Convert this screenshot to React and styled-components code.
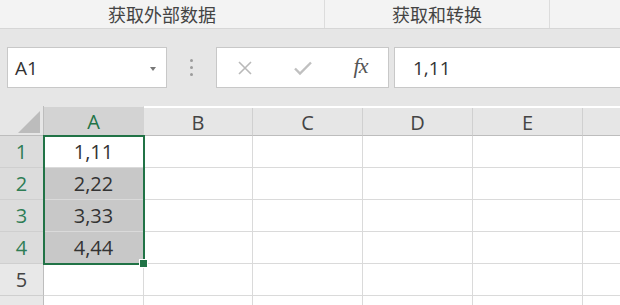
import React from 'react'
import styled, { createGlobalStyle } from 'styled-components'

const GlobalStyle = createGlobalStyle`
  html, body {
    margin: 0;
    padding: 0;
    background: #e6e6e6;
    overflow: hidden;
  }
  body {
    font-family: "Open Sans", "Noto Sans", "Noto Sans CJK SC", sans-serif;
    color: #333;
  }
`

const Page = styled.div`
  width: 620px;
  height: 305px;
  display: flex;
  flex-direction: column;
  overflow: hidden;
`

const Ribbon = styled.div`
  height: 28px;
  flex: none;
  display: flex;
  background: #f3f3f3;
  border-bottom: 1px solid #d6d6d6;
`

const RibbonGroup = styled.div`
  width: ${(p) => p.width}px;
  flex: none;
  height: 28px;
  display: flex;
  align-items: center;
  justify-content: center;
  font-family: "Noto Sans CJK SC", sans-serif;
  font-size: 18px;
  line-height: 24px;
  color: #444;
  box-sizing: border-box;
  border-right: ${(p) => (p.last ? 'none' : '1px solid #dcdcdc')};
  padding-bottom: 1px;
`

const FormulaBar = styled.div`
  height: 77px;
  flex: none;
  display: flex;
  align-items: center;
  padding-left: 7px;
  box-sizing: border-box;
`

const NameBox = styled.div`
  width: 160px;
  height: 41px;
  flex: none;
  box-sizing: border-box;
  background: #fff;
  border: 1px solid #c8c8c8;
  display: flex;
  align-items: center;
  justify-content: space-between;
  padding: 0 10px 0 7px;
  font-size: 19px;
  color: #333;
`

const DropArrow = styled.span`
  width: 0;
  height: 0;
  border-left: 3.5px solid transparent;
  border-right: 3.5px solid transparent;
  border-top: 4px solid #777;
  margin-top: 2px;
`

const Grip = styled.div`
  width: 49px;
  flex: none;
  display: flex;
  flex-direction: column;
  align-items: center;
  gap: 4px;
`

const GripDot = styled.span`
  width: 3px;
  height: 3px;
  border-radius: 50%;
  background: #9c9c9c;
`

const ButtonBox = styled.div`
  width: 173px;
  height: 41px;
  flex: none;
  box-sizing: border-box;
  background: #fff;
  border: 1px solid #c8c8c8;
  display: flex;
  align-items: center;
  padding-left: 13px;
  gap: 29px;
`

const IconButton = styled.div`
  width: 29px;
  height: 29px;
  display: flex;
  align-items: center;
  justify-content: center;
`

const Fx = styled.span`
  font-family: "Liberation Serif", "DejaVu Serif", serif;
  font-style: italic;
  font-size: 22px;
  color: #555;
  letter-spacing: -1px;
  margin-top: -3px;
`

const FormulaInput = styled.div`
  flex: 1;
  min-width: 0;
  margin-left: 5px;
  height: 41px;
  box-sizing: border-box;
  background: #fff;
  border: 1px solid #c8c8c8;
  border-right: none;
  display: flex;
  align-items: center;
  padding-left: 18px;
  font-size: 19px;
  color: #333;
`

const Sheet = styled.div`
  position: relative;
  display: grid;
  grid-template-columns: 44px 100px 109px 110px 110px 110px 60px;
  grid-template-rows: 30px repeat(6, 32px);
  background: #fff;
`

const Corner = styled.div`
  background: #e6e6e6;
  border-bottom: 1px solid #bdbdbd;
  border-right: 1px solid #bdbdbd;
  display: flex;
  align-items: flex-end;
  justify-content: flex-end;
  padding: 0 3px 2px 0;
`

const ColHead = styled.div`
  background: ${(p) => (p.selected ? '#d3d3d3' : '#e6e6e6')};
  color: ${(p) => (p.selected ? '#217346' : '#444')};
  border-bottom: 1px solid #bdbdbd;
  border-right: 1px solid ${(p) => (p.selected ? '#d3d3d3' : '#d0d0d0')};
  border-top: ${(p) => (p.selected ? '1px solid #e6e6e6' : 'none')};
  margin-top: ${(p) => (p.selected ? '0' : '2px')};
  display: flex;
  align-items: center;
  justify-content: center;
  font-size: 20px;
  padding-top: 1px;
`

const RowHead = styled.div`
  background: ${(p) => (p.selected ? '#dcdcdc' : '#e8e8e8')};
  color: ${(p) => (p.selected ? '#2e7d55' : '#444')};
  border-right: 1px solid #bdbdbd;
  border-bottom: 1px solid #cfcfcf;
  display: flex;
  align-items: center;
  justify-content: center;
  font-size: 20px;
`

const Cell = styled.div`
  background: ${(p) => (p.shaded ? '#c8c8c8' : '#fff')};
  border-right: 1px solid #dadada;
  border-bottom: 1px solid #dadada;
  display: flex;
  align-items: center;
  justify-content: center;
  font-size: 20px;
  color: #333;
`

const Selection = styled.div`
  position: absolute;
  left: 43px;
  top: 29px;
  width: 102px;
  height: 130px;
  box-sizing: border-box;
  border: 2px solid #217346;
  pointer-events: none;
`

const FillHandle = styled.div`
  position: absolute;
  right: -5px;
  bottom: -5px;
  width: 7px;
  height: 7px;
  background: #217346;
  border: 1px solid #fff;
`

const columns = ['A', 'B', 'C', 'D', 'E', '']
const values = ['1,11', '2,22', '3,33', '4,44', '', '']

const App = () => {
  return (
    <Page>
      <GlobalStyle />
      <Ribbon>
        <RibbonGroup width={325}>获取外部数据</RibbonGroup>
        <RibbonGroup width={225}>获取和转换</RibbonGroup>
        <RibbonGroup width={70} last />
      </Ribbon>
      <FormulaBar>
        <NameBox>
          A1
          <DropArrow />
        </NameBox>
        <Grip>
          <GripDot />
          <GripDot />
          <GripDot />
        </Grip>
        <ButtonBox>
          <IconButton>
            <svg width="16" height="16" viewBox="0 0 16 16">
              <path d="M2 2 L14 14 M14 2 L2 14" stroke="#b9b9b9" strokeWidth="1.6" fill="none" />
            </svg>
          </IconButton>
          <IconButton>
            <svg width="20" height="16" viewBox="0 0 20 16">
              <path d="M2 8.5 L7 13.5 L18 2.5" stroke="#c0c0c0" strokeWidth="2.4" fill="none" />
            </svg>
          </IconButton>
          <IconButton>
            <Fx>fx</Fx>
          </IconButton>
        </ButtonBox>
        <FormulaInput>1,11</FormulaInput>
      </FormulaBar>
      <Sheet>
        <Corner>
          <svg width="22" height="22" viewBox="0 0 22 22">
            <polygon points="22,0 22,22 0,22" fill="#bcbcbc" />
          </svg>
        </Corner>
        {columns.map((c, i) => (
          <ColHead key={'h' + i} selected={c === 'A'}>{c}</ColHead>
        ))}
        {values.map((v, r) => (
          <React.Fragment key={'r' + r}>
            <RowHead selected={r < 4}>{r < 5 ? r + 1 : ''}</RowHead>
            {columns.map((c, i) => (
              <Cell key={c + i} shaded={i === 0 && r > 0 && r < 4}>
                {i === 0 ? v : ''}
              </Cell>
            ))}
          </React.Fragment>
        ))}
        <Selection>
          <FillHandle />
        </Selection>
      </Sheet>
    </Page>
  )
}

export default App
